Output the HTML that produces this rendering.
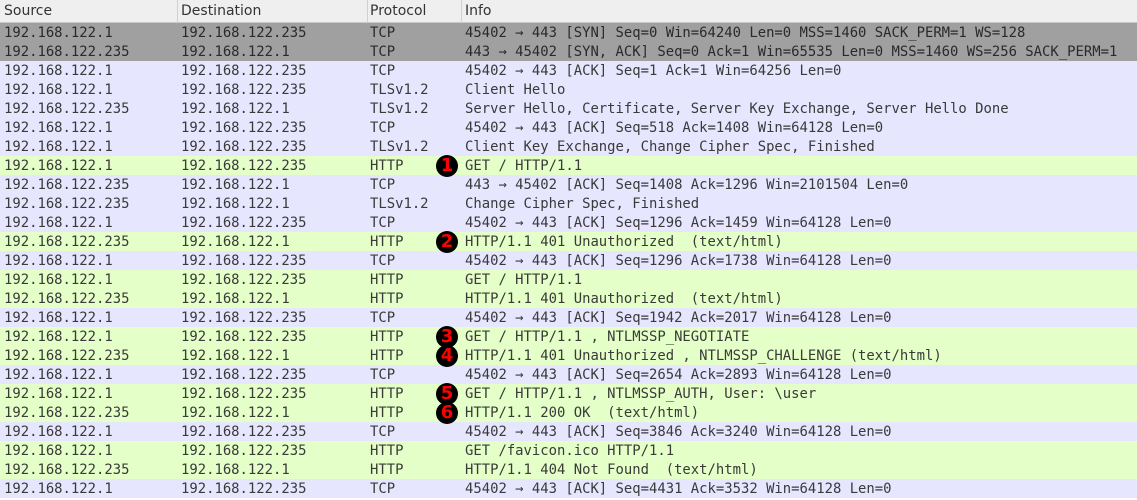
<!DOCTYPE html>
<html><head><style>
body{margin:0;width:1137px;height:500px;overflow:hidden;background:#fff;font-family:"DejaVu Sans Mono","Liberation Mono",monospace;}
.hdr{height:23px;background:#efefef;border-bottom:1px solid #c8c8c8;position:relative;font-family:"DejaVu Sans","Liberation Sans",sans-serif;font-size:14px;color:#333;box-sizing:border-box}
.hdr span{position:absolute;top:3px}
.hdr i{position:absolute;top:0;width:1px;height:23px;background:#d0d0d0}
.r{height:19px;position:relative;font-size:13.9px;color:#3a3a3a;white-space:pre}
.r span{position:absolute;top:2px}
.g{background:#a0a0a0;color:#2a2a2a}.l{background:#e7e6ff}.h{background:#e4ffc7}
.c1{left:4px}.c2{left:181px}.c3{left:370px}.c4{left:465px}
.m{position:absolute;left:436px;top:-1px;width:22px;height:22px;border-radius:50%;background:#000;color:#f00;font:bold 18px "DejaVu Sans",sans-serif;text-align:center;line-height:22px;z-index:2}
</style></head><body>
<div class="hdr"><span style="left:4px">Source</span><i style="left:177px"></i><span style="left:181px">Destination</span><i style="left:367px"></i><span style="left:370px">Protocol</span><i style="left:461px"></i><span style="left:465px">Info</span></div>
<div class="r g"><span class="c1">192.168.122.1</span><span class="c2">192.168.122.235</span><span class="c3">TCP</span><span class="c4">45402 → 443 [SYN] Seq=0 Win=64240 Len=0 MSS=1460 SACK_PERM=1 WS=128</span></div>
<div class="r g"><span class="c1">192.168.122.235</span><span class="c2">192.168.122.1</span><span class="c3">TCP</span><span class="c4">443 → 45402 [SYN, ACK] Seq=0 Ack=1 Win=65535 Len=0 MSS=1460 WS=256 SACK_PERM=1</span></div>
<div class="r l"><span class="c1">192.168.122.1</span><span class="c2">192.168.122.235</span><span class="c3">TCP</span><span class="c4">45402 → 443 [ACK] Seq=1 Ack=1 Win=64256 Len=0</span></div>
<div class="r l"><span class="c1">192.168.122.1</span><span class="c2">192.168.122.235</span><span class="c3">TLSv1.2</span><span class="c4">Client Hello</span></div>
<div class="r l"><span class="c1">192.168.122.235</span><span class="c2">192.168.122.1</span><span class="c3">TLSv1.2</span><span class="c4">Server Hello, Certificate, Server Key Exchange, Server Hello Done</span></div>
<div class="r l"><span class="c1">192.168.122.1</span><span class="c2">192.168.122.235</span><span class="c3">TCP</span><span class="c4">45402 → 443 [ACK] Seq=518 Ack=1408 Win=64128 Len=0</span></div>
<div class="r l"><span class="c1">192.168.122.1</span><span class="c2">192.168.122.235</span><span class="c3">TLSv1.2</span><span class="c4">Client Key Exchange, Change Cipher Spec, Finished</span></div>
<div class="r h"><span class="c1">192.168.122.1</span><span class="c2">192.168.122.235</span><span class="c3">HTTP</span><div class="m">1</div><span class="c4">GET / HTTP/1.1</span></div>
<div class="r l"><span class="c1">192.168.122.235</span><span class="c2">192.168.122.1</span><span class="c3">TCP</span><span class="c4">443 → 45402 [ACK] Seq=1408 Ack=1296 Win=2101504 Len=0</span></div>
<div class="r l"><span class="c1">192.168.122.235</span><span class="c2">192.168.122.1</span><span class="c3">TLSv1.2</span><span class="c4">Change Cipher Spec, Finished</span></div>
<div class="r l"><span class="c1">192.168.122.1</span><span class="c2">192.168.122.235</span><span class="c3">TCP</span><span class="c4">45402 → 443 [ACK] Seq=1296 Ack=1459 Win=64128 Len=0</span></div>
<div class="r h"><span class="c1">192.168.122.235</span><span class="c2">192.168.122.1</span><span class="c3">HTTP</span><div class="m">2</div><span class="c4">HTTP/1.1 401 Unauthorized  (text/html)</span></div>
<div class="r l"><span class="c1">192.168.122.1</span><span class="c2">192.168.122.235</span><span class="c3">TCP</span><span class="c4">45402 → 443 [ACK] Seq=1296 Ack=1738 Win=64128 Len=0</span></div>
<div class="r h"><span class="c1">192.168.122.1</span><span class="c2">192.168.122.235</span><span class="c3">HTTP</span><span class="c4">GET / HTTP/1.1</span></div>
<div class="r h"><span class="c1">192.168.122.235</span><span class="c2">192.168.122.1</span><span class="c3">HTTP</span><span class="c4">HTTP/1.1 401 Unauthorized  (text/html)</span></div>
<div class="r l"><span class="c1">192.168.122.1</span><span class="c2">192.168.122.235</span><span class="c3">TCP</span><span class="c4">45402 → 443 [ACK] Seq=1942 Ack=2017 Win=64128 Len=0</span></div>
<div class="r h"><span class="c1">192.168.122.1</span><span class="c2">192.168.122.235</span><span class="c3">HTTP</span><div class="m">3</div><span class="c4">GET / HTTP/1.1 , NTLMSSP_NEGOTIATE</span></div>
<div class="r h"><span class="c1">192.168.122.235</span><span class="c2">192.168.122.1</span><span class="c3">HTTP</span><div class="m">4</div><span class="c4">HTTP/1.1 401 Unauthorized , NTLMSSP_CHALLENGE (text/html)</span></div>
<div class="r l"><span class="c1">192.168.122.1</span><span class="c2">192.168.122.235</span><span class="c3">TCP</span><span class="c4">45402 → 443 [ACK] Seq=2654 Ack=2893 Win=64128 Len=0</span></div>
<div class="r h"><span class="c1">192.168.122.1</span><span class="c2">192.168.122.235</span><span class="c3">HTTP</span><div class="m">5</div><span class="c4">GET / HTTP/1.1 , NTLMSSP_AUTH, User: \user</span></div>
<div class="r h"><span class="c1">192.168.122.235</span><span class="c2">192.168.122.1</span><span class="c3">HTTP</span><div class="m">6</div><span class="c4">HTTP/1.1 200 OK  (text/html)</span></div>
<div class="r l"><span class="c1">192.168.122.1</span><span class="c2">192.168.122.235</span><span class="c3">TCP</span><span class="c4">45402 → 443 [ACK] Seq=3846 Ack=3240 Win=64128 Len=0</span></div>
<div class="r h"><span class="c1">192.168.122.1</span><span class="c2">192.168.122.235</span><span class="c3">HTTP</span><span class="c4">GET /favicon.ico HTTP/1.1</span></div>
<div class="r h"><span class="c1">192.168.122.235</span><span class="c2">192.168.122.1</span><span class="c3">HTTP</span><span class="c4">HTTP/1.1 404 Not Found  (text/html)</span></div>
<div class="r l"><span class="c1">192.168.122.1</span><span class="c2">192.168.122.235</span><span class="c3">TCP</span><span class="c4">45402 → 443 [ACK] Seq=4431 Ack=3532 Win=64128 Len=0</span></div>
</body></html>
